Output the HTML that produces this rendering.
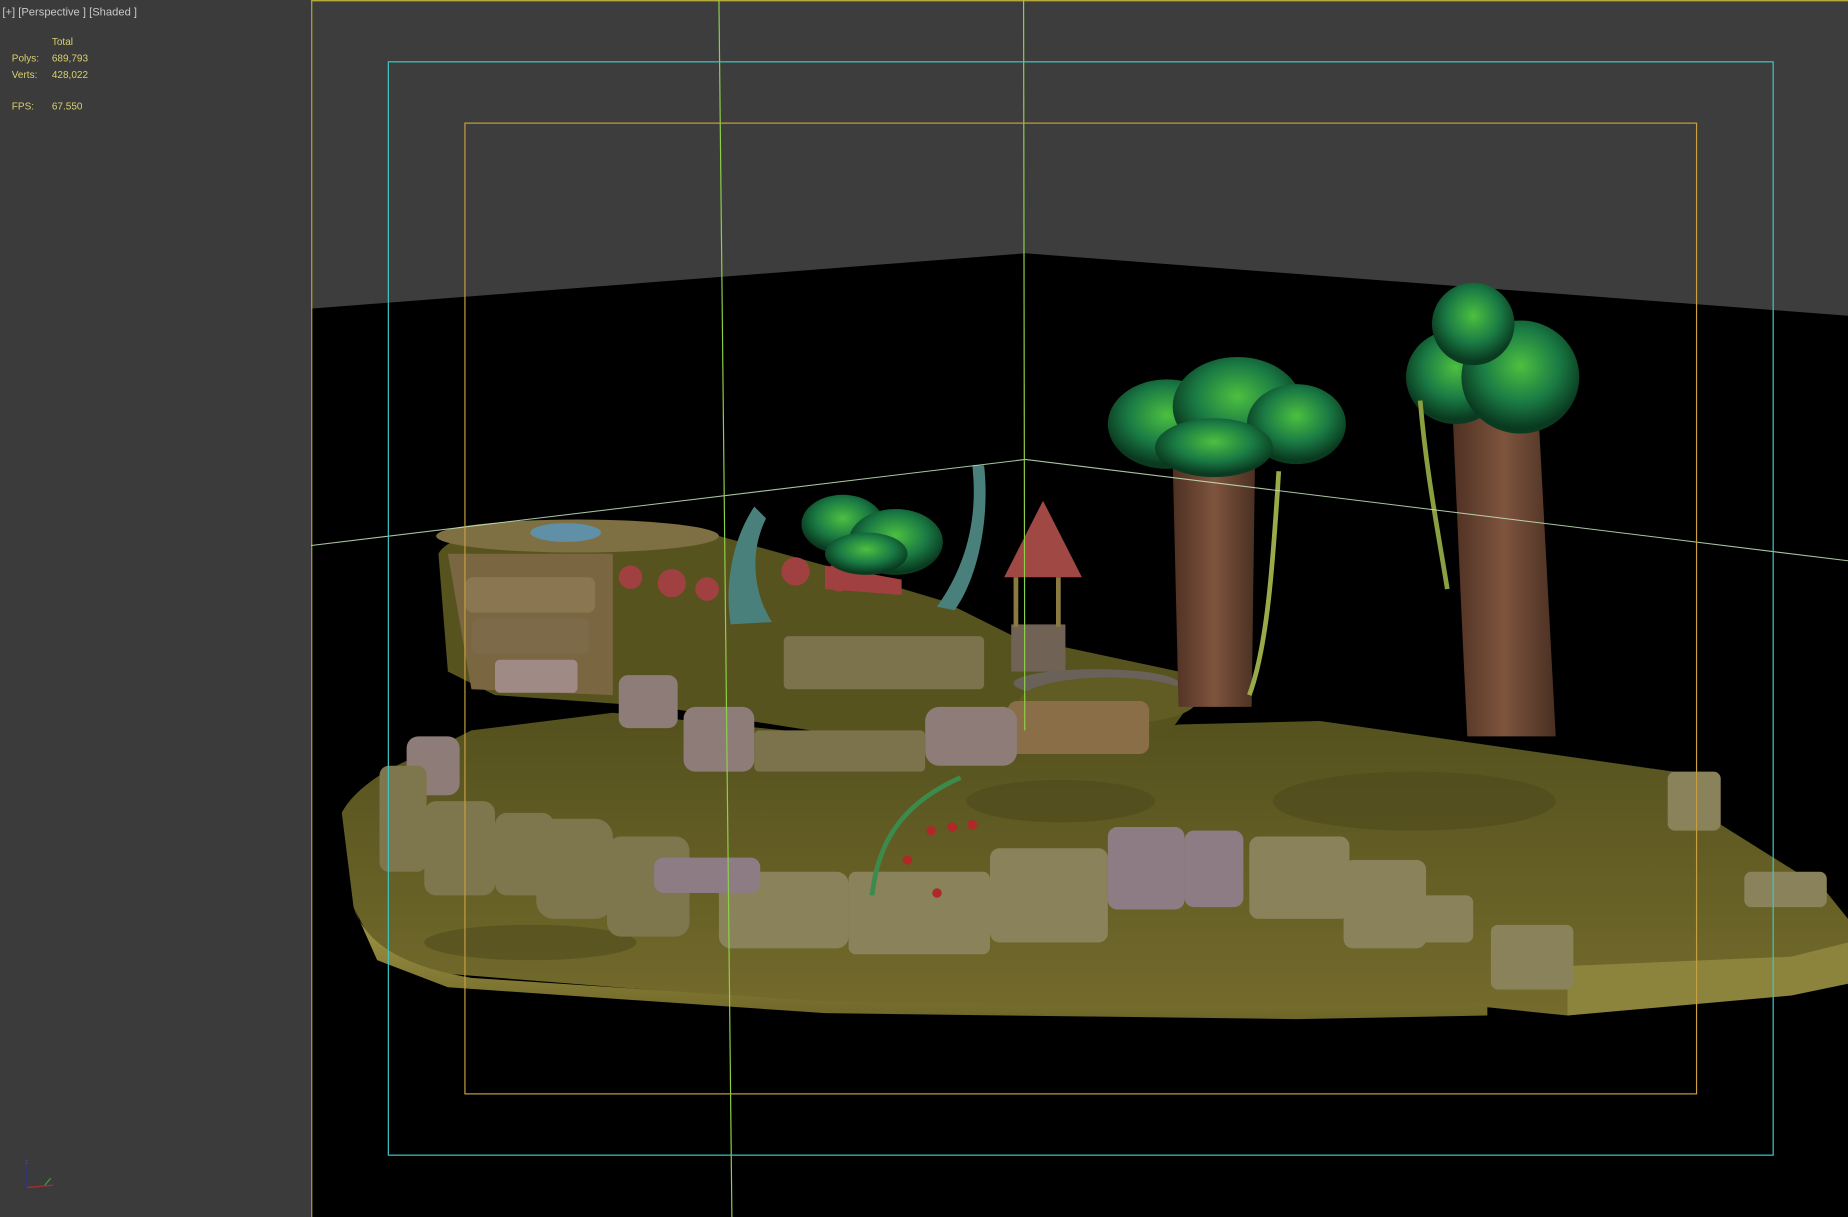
<!DOCTYPE html>
<html><head><style>
html,body{margin:0;padding:0;background:#3b3b3b;overflow:hidden}
svg{display:block}
text{font-family:"Liberation Sans",sans-serif}
</style></head><body>
<svg width="1848" height="1217" viewBox="0 0 1568 1033" preserveAspectRatio="none" xmlns="http://www.w3.org/2000/svg">
<defs>
<linearGradient id="gr" x1="0" y1="0" x2="0" y2="1"><stop offset="0" stop-color="#54511e"/><stop offset="1" stop-color="#746b2c"/></linearGradient>
<linearGradient id="rim" x1="0" y1="0" x2="0" y2="1"><stop offset="0" stop-color="#a49a48"/><stop offset="1" stop-color="#6e6628"/></linearGradient>
<linearGradient id="tr" x1="0" y1="0" x2="1" y2="0"><stop offset="0" stop-color="#4e3022"/><stop offset=".5" stop-color="#7e543e"/><stop offset="1" stop-color="#4a3022"/></linearGradient>
<radialGradient id="lf" cx=".5" cy=".4" r=".55"><stop offset="0" stop-color="#4cc040"/><stop offset=".6" stop-color="#1a7a44"/><stop offset="1" stop-color="#0a3a20"/></radialGradient>
</defs>
<rect x="0" y="0" width="1568" height="1033" fill="#3b3b3b"/>
<rect x="264" y="0" width="1304" height="1033" fill="#3d3d3d"/>
<polygon points="264,262 870,215 1568,268 1568,1033 264,1033" fill="#000"/>
<line x1="264" y1="0.6" x2="1568" y2="0.6" stroke="#b5a93a" stroke-width="1.2"/>
<line x1="264.5" y1="0" x2="264.5" y2="1033" stroke="#b5a93a" stroke-width="1"/>
<path d="M290,690 C300,670 330,650 360,640 L400,620 520,605 860,640 1000,615 1120,612 1420,655 1460,700 1548,755 1568,780 1568,830 1520,842 1330,862 1262,855 1250,858 1100,860 700,852 360,825 318,805 300,770 Z" fill="url(#gr)"/>
<path d="M300,770 C310,800 340,820 400,830 L700,850 1100,857 1262,852 1262,862 1100,865 700,860 380,838 320,815 Z" fill="url(#rim)"/>
<path d="M1330,820 L1520,812 1568,800 1568,835 1520,845 1330,862 Z" fill="#8c843c"/>
<g fill="#4a461a" opacity=".5"><ellipse cx="1200" cy="680" rx="120" ry="25"/><ellipse cx="900" cy="680" rx="80" ry="18"/><ellipse cx="450" cy="800" rx="90" ry="15"/></g>
<path d="M372,470 C380,455 420,445 470,445 L610,455 700,480 800,510 860,540 1000,570 1015,590 990,625 860,640 720,625 560,600 420,590 380,570 Z" fill="#57531f"/>
<path d="M380,470 L520,470 520,590 400,585 Z" fill="#7a6640"/>
<rect x="395" y="490" width="110" height="30" rx="6" fill="#8a7650"/>
<rect x="400" y="525" width="100" height="30" rx="6" fill="#7c6a48"/>
<rect x="420" y="560" width="70" height="28" rx="4" fill="#a08a86"/>
<ellipse cx="490" cy="455" rx="120" ry="14" fill="#7e7042"/>
<ellipse cx="480" cy="452" rx="30" ry="8" fill="#6090a8"/>
<g fill="#a04040"><circle cx="535" cy="490" r="10"/><circle cx="570" cy="495" r="12"/><circle cx="600" cy="500" r="10"/><circle cx="675" cy="485" r="12"/><circle cx="712" cy="490" r="12"/><path d="M700,480 L765,492 765,505 700,500Z"/></g>
<path d="M620,530 C615,500 620,460 640,430 L650,440 C635,470 640,505 655,528 Z" fill="#4a807c"/>
<path d="M795,515 C820,480 830,440 825,395 L835,395 C840,440 830,490 810,518 Z" fill="#4a807c"/>
<g fill="url(#lf)"><ellipse cx="715" cy="445" rx="35" ry="25"/><ellipse cx="760" cy="460" rx="40" ry="28"/><ellipse cx="735" cy="470" rx="35" ry="18"/></g>
<polygon points="885,425 852,490 918,490" fill="#a04844"/>
<rect x="858" y="530" width="46" height="40" fill="#706254"/>
<rect x="860" y="490" width="4" height="42" fill="#8a7a40"/><rect x="896" y="490" width="4" height="42" fill="#8a7a40"/>
<ellipse cx="930" cy="580" rx="70" ry="12" fill="#6a625a"/>
<ellipse cx="940" cy="595" rx="75" ry="20" fill="#605c24"/>
<rect x="855" y="595" width="120" height="45" rx="8" fill="#8a6e48"/>
<g fill="#8e7c78"><rect x="525" y="573" width="50" height="45" rx="8"/><rect x="580" y="600" width="60" height="55" rx="10"/><rect x="785" y="600" width="78" height="50" rx="12"/><rect x="345" y="625" width="45" height="50" rx="10"/></g>
<g fill="#7c724c"><rect x="640" y="620" width="145" height="35" rx="4"/><rect x="665" y="540" width="170" height="45" rx="4"/></g>
<g fill="#7e764c"><rect x="322" y="650" width="40" height="90" rx="8"/><rect x="360" y="680" width="60" height="80" rx="10"/><rect x="420" y="690" width="50" height="70" rx="10"/><rect x="455" y="695" width="65" height="85" rx="15"/><rect x="515" y="710" width="70" height="85" rx="12"/></g>
<g fill="#8a825a"><rect x="610" y="740" width="110" height="65" rx="10"/><rect x="720" y="740" width="120" height="70" rx="6"/><rect x="840" y="720" width="100" height="80" rx="8"/><rect x="1060" y="710" width="85" height="70" rx="8"/><rect x="1140" y="730" width="70" height="75" rx="8"/><rect x="1190" y="760" width="60" height="40" rx="6"/><rect x="1265" y="785" width="70" height="55" rx="6"/><rect x="1415" y="655" width="45" height="50" rx="6"/><rect x="1480" y="740" width="70" height="30" rx="6"/></g>
<g fill="#8e7c84"><rect x="940" y="702" width="65" height="70" rx="8"/><rect x="1005" y="705" width="50" height="65" rx="8"/><rect x="555" y="728" width="90" height="30" rx="8"/></g>
<path d="M740,760 C745,710 770,680 815,660" stroke="#3c8a4c" stroke-width="4" fill="none"/>
<g fill="#b02828"><circle cx="790" cy="705" r="4"/><circle cx="808" cy="702" r="4"/><circle cx="825" cy="700" r="4"/><circle cx="770" cy="730" r="4"/><circle cx="795" cy="758" r="4"/></g>
<path d="M995,390 L1065,380 1062,600 1000,600 Z" fill="url(#tr)"/>
<path d="M1232,340 L1305,345 1320,625 1245,625 1240,520 Z" fill="url(#tr)"/>
<g fill="url(#lf)"><ellipse cx="990" cy="360" rx="50" ry="38"/><ellipse cx="1050" cy="345" rx="55" ry="42"/><ellipse cx="1100" cy="360" rx="42" ry="34"/><ellipse cx="1030" cy="380" rx="50" ry="25"/></g>
<g fill="url(#lf)"><ellipse cx="1235" cy="320" rx="42" ry="40"/><ellipse cx="1290" cy="320" rx="50" ry="48"/><ellipse cx="1250" cy="275" rx="35" ry="35"/></g>
<path d="M1085,400 C1080,480 1075,550 1060,590" stroke="#9aaa48" stroke-width="4" fill="none"/>
<path d="M1205,340 C1210,400 1220,450 1228,500" stroke="#8aa040" stroke-width="4" fill="none"/>
<polyline points="264,463 870,390 1568,476" fill="none" stroke="#c8e8c0" stroke-width="0.9" opacity=".85"/>
<line x1="868.5" y1="0" x2="869.5" y2="620" stroke="#8fd04a" stroke-width="1"/>
<line x1="610" y1="0" x2="621" y2="1033" stroke="#8fd04a" stroke-width="1"/>
<rect x="329.5" y="52.5" width="1175" height="928" fill="none" stroke="#40c8c8" stroke-width="1"/>
<rect x="394.5" y="104.5" width="1045" height="824" fill="none" stroke="#c8a040" stroke-width="1"/>
<g font-size="9.5" fill="#c8c8c8"><text x="2" y="13">[+] [Perspective ] [Shaded ]</text></g>
<g font-size="8.5" fill="#d8d070">
<text x="44" y="38">Total</text>
<text x="10" y="52">Polys:</text><text x="44" y="52">689,793</text>
<text x="10" y="66">Verts:</text><text x="44" y="66">428,022</text>
<text x="10" y="93">FPS:</text><text x="44" y="93">67.550</text>
</g>
<line x1="23" y1="990" x2="23" y2="1008" stroke="#3030a0" stroke-width="1.2"/>
<line x1="23" y1="1008" x2="45" y2="1006" stroke="#a03030" stroke-width="1.2"/>
<line x1="38" y1="1006" x2="43" y2="1000" stroke="#40a040" stroke-width="1"/>
<text x="21" y="988" font-size="6" fill="#4040c0">z</text>
</svg>
</body></html>
